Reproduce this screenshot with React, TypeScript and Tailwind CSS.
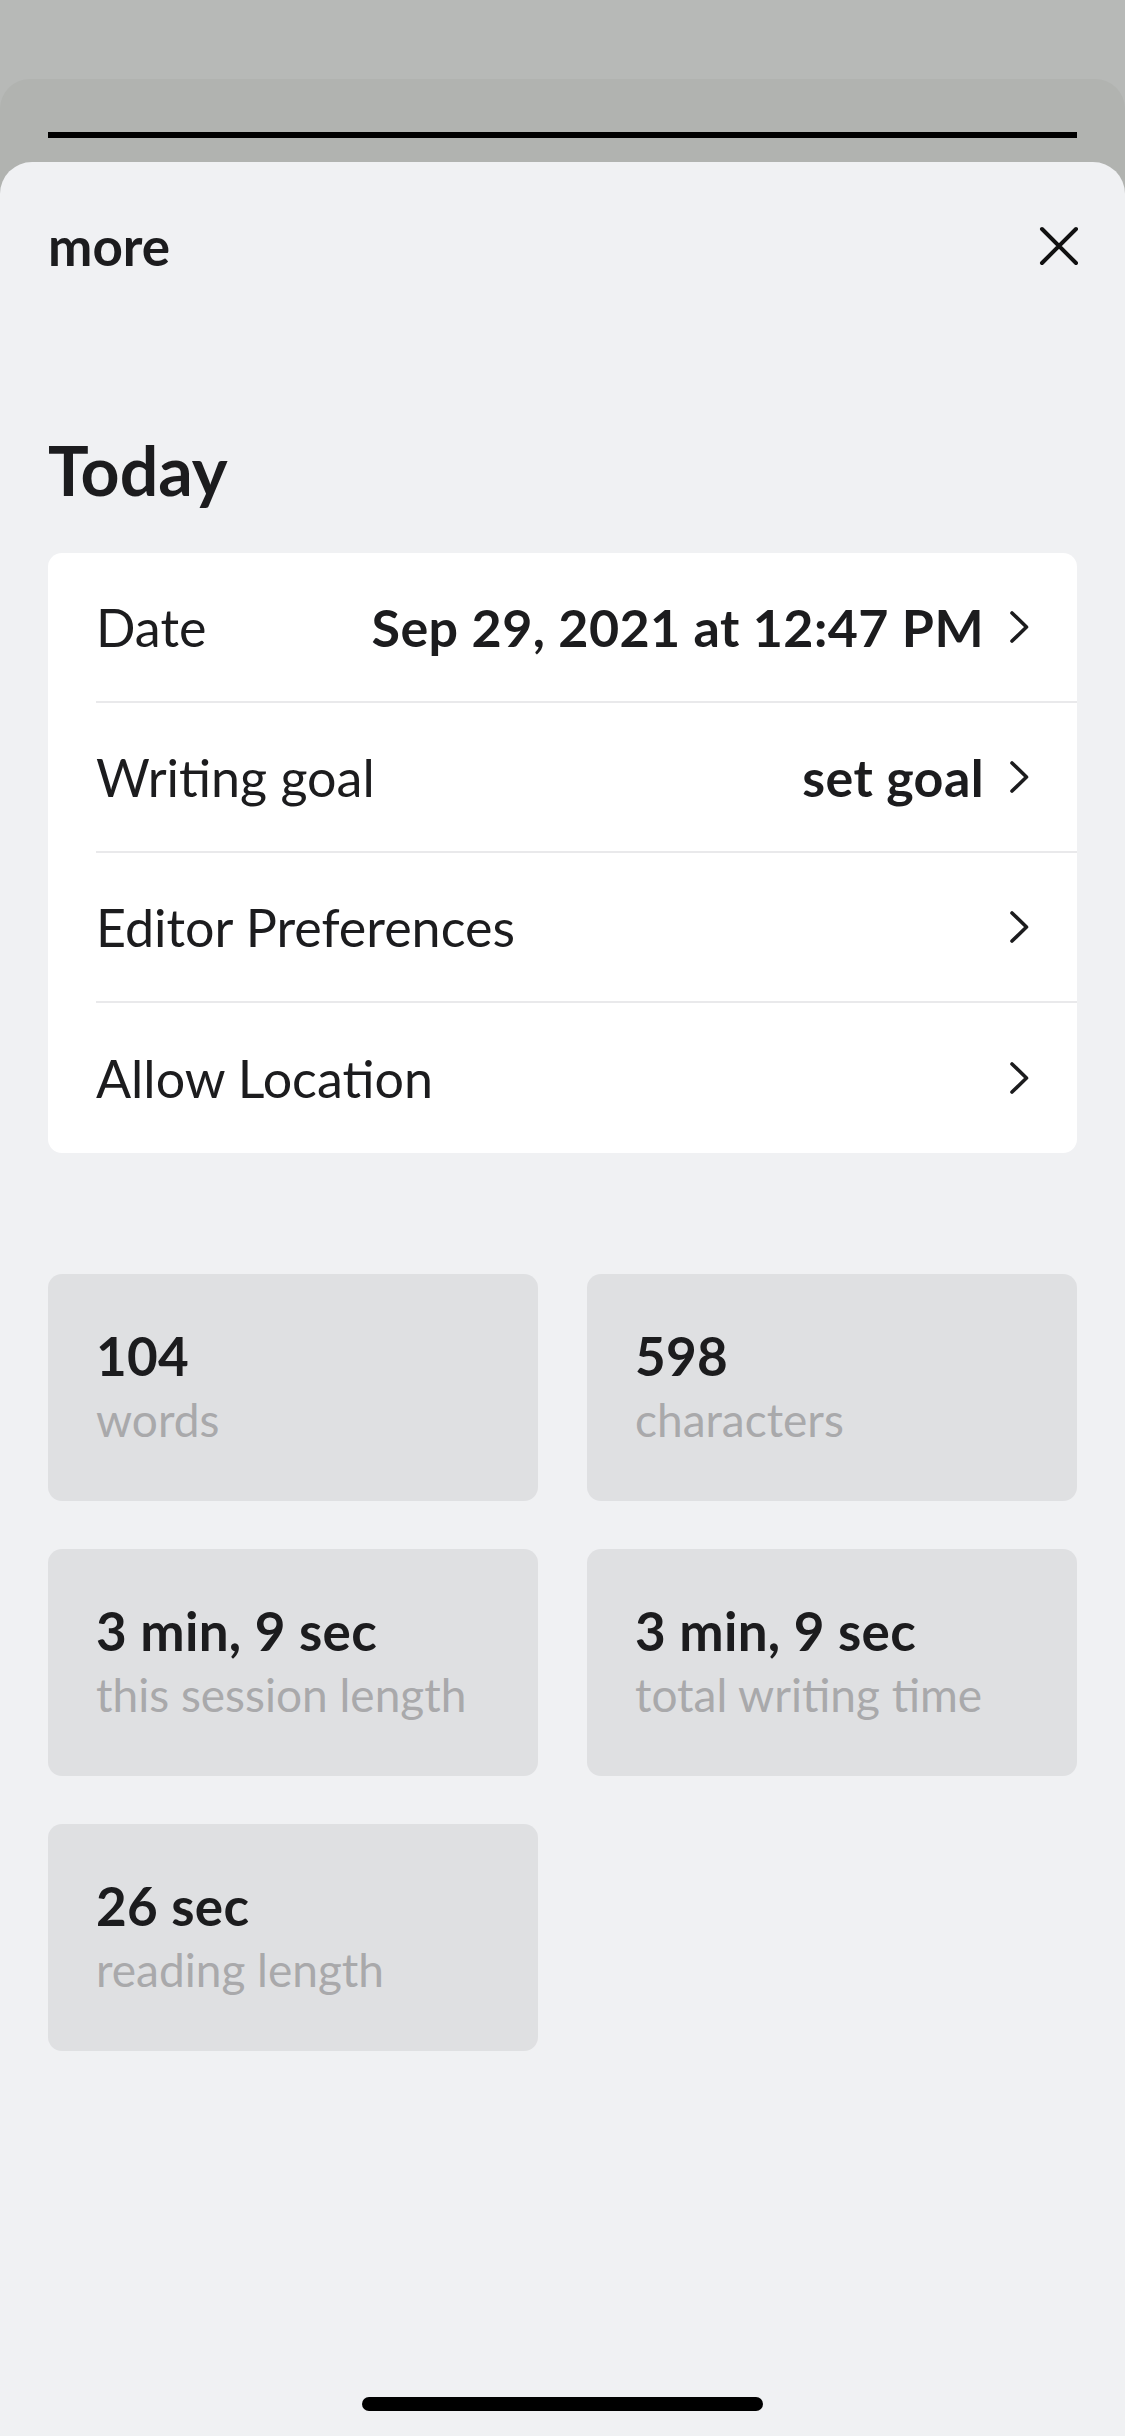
const rows = [
  { label: "Date", value: "Sep 29, 2021 at 12:47 PM" },
  { label: "Writing goal", value: "set goal" },
  { label: "Editor Preferences", value: "" },
  { label: "Allow Location", value: "" },
];

const stats = [
  { value: "104", label: "words" },
  { value: "598", label: "characters" },
  { value: "3 min, 9 sec", label: "this session length" },
  { value: "3 min, 9 sec", label: "total writing time" },
  { value: "26 sec", label: "reading length" },
];

const Chevron = () => (
  <svg width="22" height="34" viewBox="0 0 22 34" fill="none">
    <path
      d="M3 3 L17.5 17 L3 31"
      stroke="#1c1c1e"
      strokeWidth="3.6"
      strokeLinecap="round"
      strokeLinejoin="round"
    />
  </svg>
);

const App = () => {
  return (
    <div
      className="flex h-[2436px] w-full flex-col bg-[#b7b9b7] pt-[79px] text-[#1c1c1e]"
      style={{ fontFamily: "Lato, 'Noto Sans', sans-serif" }}
    >
      <div className="flex flex-1 flex-col rounded-t-[30px] bg-[#b1b3b0]">
        <div className="px-12 pt-[53px] pb-[24px]">
          <div className="h-[6px] bg-black" />
        </div>

        <div className="flex flex-1 flex-col rounded-t-[32px] bg-[#f0f1f3]">
          <div className="flex h-[168px] items-center justify-between px-12">
            <span className="text-[53px] font-bold">more</span>
            <svg width="40" height="40" viewBox="0 0 40 40" className="-mr-[2px]">
              <path
                d="M3 3 L37 37 M37 3 L3 37"
                stroke="#111"
                strokeWidth="4"
                strokeLinecap="round"
              />
            </svg>
          </div>

          <h1 className="mt-[100px] px-12 text-[68px] font-bold leading-[80px]">
            Today
          </h1>

          <div className="mx-12 mt-[43px] overflow-hidden rounded-[14px] bg-white">
            {rows.map((row, i) => (
              <div key={row.label} className="pl-12">
                <div
                  className={
                    "flex h-[150px] items-center justify-between pr-[46px] " +
                    (i < rows.length - 1 ? "border-b-2 border-[#e9e9eb]" : "")
                  }
                >
                  <span className="text-[52px]">{row.label}</span>
                  <div className="flex items-center gap-[25px]">
                    {row.value && (
                      <span className="text-[52px] font-bold tracking-[0.4px]">
                        {row.value}
                      </span>
                    )}
                    <Chevron />
                  </div>
                </div>
              </div>
            ))}
          </div>

          <div className="mx-12 mt-[121px] grid grid-cols-2 gap-x-[49px] gap-y-[48px]">
            {stats.map((s, i) => (
              <div
                key={i}
                className="flex h-[227px] flex-col justify-center rounded-[14px] bg-[#dfe0e2] px-12"
              >
                <span className="text-[53px] font-bold leading-[64px] tracking-[0.3px]">
                  {s.value}
                </span>
                <span className="text-[46px] leading-[64px] text-[#a9a9ab]">
                  {s.label}
                </span>
              </div>
            ))}
          </div>

          <div className="mt-auto flex justify-center pb-[25px]">
            <div className="h-[14px] w-[401px] rounded-full bg-black" />
          </div>
        </div>
      </div>
    </div>
  );
};

export default App;
